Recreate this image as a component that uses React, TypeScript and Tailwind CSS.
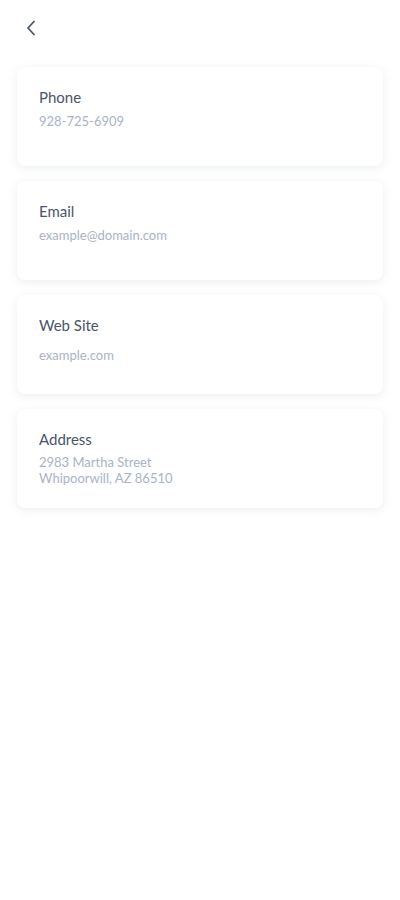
const items = [
  { label: 'Phone', lines: ['928-725-6909'], gap: 'mt-[6px]' },
  { label: 'Email', lines: ['example@domain.com'], gap: 'mt-[6px]' },
  { label: 'Web Site', lines: ['example.com'], gap: 'mt-[12px]' },
  { label: 'Address', lines: ['2983 Martha Street', 'Whipoorwill, AZ 86510'], gap: 'mt-[5px]' },
]

export default function App() {
  return (
    <div className="min-h-[900px] w-[400px] bg-white font-['Lato',sans-serif]">
      <div className="px-[26px] pt-[20px] pb-[16px]">
        <button className="flex h-[16px] w-[12px] items-center text-[#4a5568]">
          <svg width="10" height="16" viewBox="0 0 10 16" fill="none">
            <path d="M8 1.5L2 8l6 6.5" stroke="currentColor" strokeWidth="1.8" strokeLinecap="round" strokeLinejoin="round" />
          </svg>
        </button>
      </div>

      <div className="flex flex-col gap-[15px] px-[17px] pt-[15px]">
        {items.map(item => (
          <div
            key={item.label}
            className="h-[99px] rounded-[8px] bg-white px-[22px] pt-[20px] shadow-[0_2px_10px_rgba(100,116,139,0.12)]"
          >
            <p className="text-[15px] leading-[20px] text-[#4a5568]">{item.label}</p>
            <div className={`${item.gap} text-[13px] leading-[16px] text-[#a9b3c6]`}>
              {item.lines.map(l => (
                <p key={l}>{l}</p>
              ))}
            </div>
          </div>
        ))}
      </div>
    </div>
  )
}
